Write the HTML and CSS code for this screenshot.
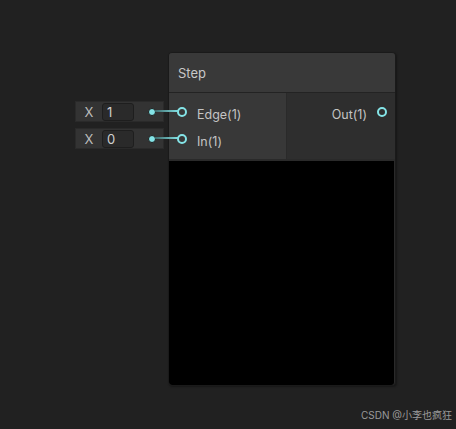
FILE: index.html
```html
<!DOCTYPE html>
<html lang="en">
<head>
    <meta charset="UTF-8">
    <title>Step Node</title>
    <link rel="stylesheet" href="styles.css">
</head>
<body>
    <div class="graph">
        <div class="node">
            <div class="node-title">Step</div>
            <div class="ports">
                <div class="port-col inputs-col">
                    <div class="port"><span class="ring"></span>Edge(1)</div>
                    <div class="port"><span class="ring"></span>In(1)</div>
                </div>
                <div class="port-col outputs-col">
                    <div class="port out">Out(1)<span class="ring"></span></div>
                </div>
            </div>
            <div class="preview"></div>
        </div>

        <div class="inputs">
            <div class="field-row">
                <span class="axis">X</span>
                <span class="value">1</span>
                <span class="dot"></span>
                <span class="wire"></span>
            </div>
            <div class="field-row">
                <span class="axis">X</span>
                <span class="value">0</span>
                <span class="dot"></span>
                <span class="wire"></span>
            </div>
        </div>

        <div class="watermark">CSDN @小李也疯狂</div>
    </div>
</body>
</html>
```

FILE: styles.css
```css
body {
    margin: 0;
    background: #212121;
    font-family: Inter, "Noto Sans", "Noto Sans CJK SC", sans-serif;
    color: #c4c4c4;
}

.graph {
    position: relative;
    width: 456px;
    height: 429px;
    overflow: hidden;
}

.node {
    position: absolute;
    left: 168px;
    top: 52px;
    width: 228px;
    height: 334px;
    background: #2a2a2a;
    border: 1px solid #1a1a1a;
    border-radius: 4px;
    box-sizing: border-box;
    display: flex;
    flex-direction: column;
    overflow: hidden;
    box-shadow: 1px 1px 2px rgba(0,0,0,0.35);
}

.node-title {
    height: 39px;
    background: #393939;
    border-bottom: 1px solid #232323;
    padding-left: 9px;
    display: flex;
    align-items: center;
    font-size: 13px;
    color: #c8c8c8;
    flex-shrink: 0;
}

.ports {
    display: flex;
    height: 66px;
    border-bottom: 2px solid #2a2a2a;
    flex-shrink: 0;
}

.port-col {
    display: flex;
    flex-direction: column;
    padding-top: 10px;
    gap: 5px;
}

.inputs-col {
    width: 117px;
    background: #383838;
    border-right: 1px solid #2a2a2a;
}

.outputs-col {
    flex: 1;
    background: #2e2e2e;
    align-items: flex-end;
    padding-right: 8px;
}

.port {
    height: 22px;
    display: flex;
    align-items: center;
    font-size: 12.5px;
    color: #c4c4c4;
}

.inputs-col .port {
    padding-left: 8px;
}

.port .ring {
    width: 6px;
    height: 6px;
    border: 2px solid #84e4e7;
    border-radius: 50%;
    margin-right: 10px;
    margin-top: -5px;
}

.port.out .ring {
    margin-right: 0;
    margin-left: 10px;
    margin-top: -4px;
}

.preview {
    flex: 1;
    background: #000;
    margin: 0 1px 0 0;
    border-radius: 0 0 3px 3px;
}

.inputs {
    position: absolute;
    left: 75px;
    top: 101px;
    z-index: 2;
    display: flex;
    flex-direction: column;
    gap: 6px;
}

.field-row {
    position: relative;
    width: 89px;
    height: 21px;
    background: #333333;
    border: 1px solid #2a2a2a;
    box-sizing: border-box;
    display: flex;
    align-items: center;
    font-size: 13px;
}

.axis {
    width: 26px;
    text-align: center;
    color: #bdbdbd;
}

.value {
    width: 32px;
    height: 18px;
    background: #2a2a2a;
    border: 1px solid #1e1e1e;
    border-radius: 3px;
    box-sizing: border-box;
    padding-left: 4px;
    line-height: 16px;
    color: #d0d0d0;
}

.dot {
    position: absolute;
    left: 72px;
    top: 6px;
    width: 6px;
    height: 6px;
    background: #84e4e7;
    border: 1px solid #1c1c1c;
    border-radius: 50%;
}

.wire {
    position: absolute;
    left: 79px;
    top: 8px;
    width: 24px;
    height: 2px;
    background: linear-gradient(to right, #3e6a6b, #84e4e7);
}

.watermark {
    position: absolute;
    right: 4px;
    bottom: 7px;
    font-size: 10px;
    color: #9a9a9a;
}
```
